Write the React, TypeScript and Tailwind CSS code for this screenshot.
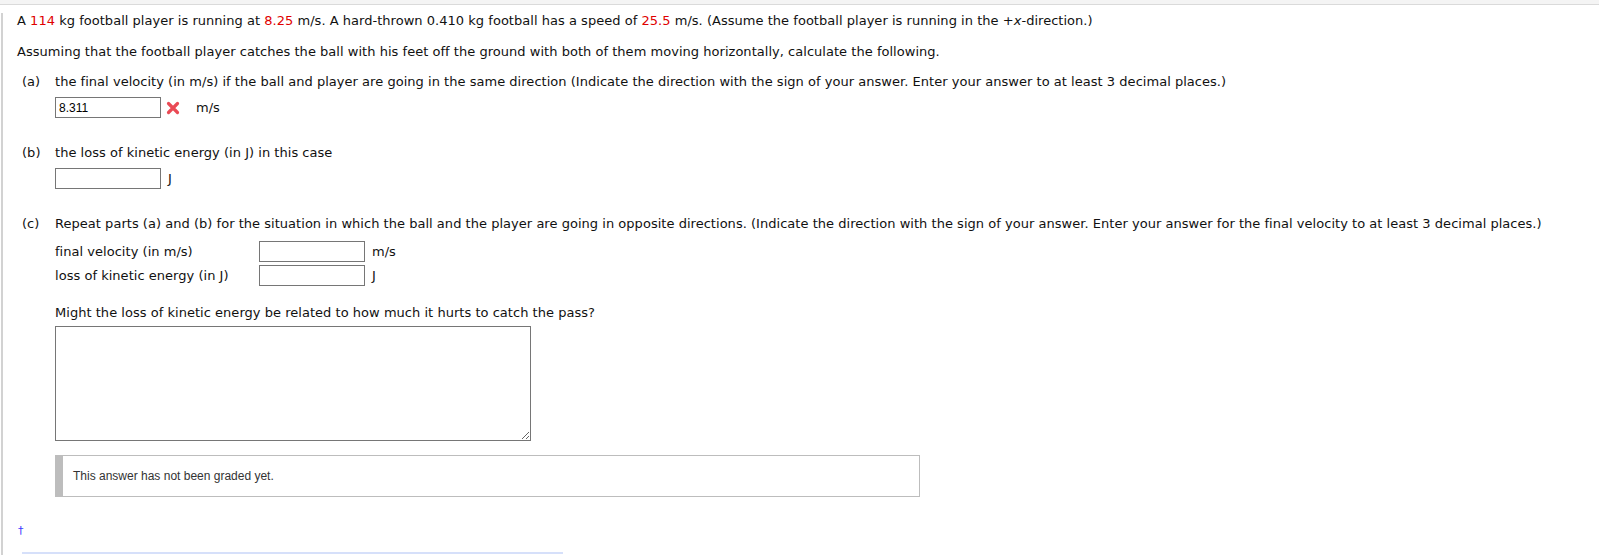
import React from 'react';

const red = 'text-[#e00000]';

function XMark() {
  return (
    <svg width="14" height="14" viewBox="0 0 14 14" className="shrink-0">
      <path d="M2.5 2.5 L11.5 11.5 M11.5 2.5 L2.5 11.5" stroke="#ea4a55" strokeWidth="3.2" strokeLinecap="round" />
    </svg>
  );
}

function Box({ w = 'w-[106px]', value = '' }: { w?: string; value?: string }) {
  return (
    <input
      readOnly
      value={value}
      className={`${w} h-[21px] border border-[#767676] bg-white px-[3px] text-[12px] text-black outline-none font-['Liberation_Sans',Arial,sans-serif]`}
    />
  );
}

function Part({ tag, children }: { tag: string; children: React.ReactNode }) {
  return (
    <div className="flex h-[16px] leading-[16px]">
      <span className="w-[38px] pl-[5px] shrink-0">{tag}</span>
      <span>{children}</span>
    </div>
  );
}

export default function App() {
  return (
    <div className="min-h-[555px] bg-white text-[13px] text-[#111] tracking-[0.03px] font-['DejaVu_Sans',Verdana,sans-serif]">
      <div className="h-[5px] bg-[#f4f4f4] border-b border-[#dadada]" />
      <div className="ml-px border-l-2 border-[#d2d2d2] pl-[14px] pb-px">
        <div className="mt-[8px] h-[16px] leading-[16px]">
          A <span className={red}>114</span> kg football player is running at <span className={red}>8.25</span> m/s. A
          hard-thrown 0.410 kg football has a speed of <span className={red}>25.5</span> m/s. (Assume the football player
          is running in the +<i>x</i>-direction.)
        </div>
        <div className="mt-[15px] h-[16px] leading-[16px]">
          Assuming that the football player catches the ball with his feet off the ground with both of them moving
          horizontally, calculate the following.
        </div>

        <div className="mt-[14px]">
          <Part tag="(a)">
            the final velocity (in m/s) if the ball and player are going in the same direction (Indicate the direction
            with the sign of your answer. Enter your answer to at least 3 decimal places.)
          </Part>
        </div>
        <div className="mt-[7px] ml-[38px] flex items-center">
          <Box value="8.311" />
          <span className="ml-[5px]"><XMark /></span>
          <span className="ml-[16px]">m/s</span>
        </div>

        <div className="mt-[27px]">
          <Part tag="(b)">the loss of kinetic energy (in J) in this case</Part>
        </div>
        <div className="mt-[7px] ml-[38px] flex items-center">
          <Box />
          <span className="ml-[7px]">J</span>
        </div>

        <div className="mt-[27px]">
          <Part tag="(c)">
            Repeat parts (a) and (b) for the situation in which the ball and the player are going in opposite
            directions. (Indicate the direction with the sign of your answer. Enter your answer for the final velocity
            to at least 3 decimal places.)
          </Part>
        </div>
        <div className="ml-[38px]">
          <div className="mt-[9px] flex items-center">
            <span className="w-[204px]">final velocity (in m/s)</span>
            <Box />
            <span className="ml-[7px]">m/s</span>
          </div>
          <div className="mt-[3px] flex items-center">
            <span className="w-[204px]">loss of kinetic energy (in J)</span>
            <Box />
            <span className="ml-[7px]">J</span>
          </div>

          <div className="mt-[19px] h-[16px] leading-[16px]">
            Might the loss of kinetic energy be related to how much it hurts to catch the pass?
          </div>
          <textarea
            readOnly
            className="mt-[5px] block w-[476px] h-[115px] border border-[#767676] bg-white outline-none"
          />

          <div className="mt-[14px] flex w-[865px] h-[42px] border border-[#bdbdbd] bg-white">
            <div className="w-[7px] bg-[#bdbdbd]" />
            <div className="pl-[10px] flex items-center text-[12px] tracking-normal text-[#333] font-['Liberation_Sans',Arial,sans-serif]">
              This answer has not been graded yet.
            </div>
          </div>
        </div>

        <div className="mt-[26px] h-[16px] leading-[16px] pl-[1px] text-[11px] text-[#3a3aff]">†</div>
        <div className="mt-[13px] ml-[5px] w-[541px] h-[2px] bg-[#d6e0fa]" />
      </div>
    </div>
  );
}
